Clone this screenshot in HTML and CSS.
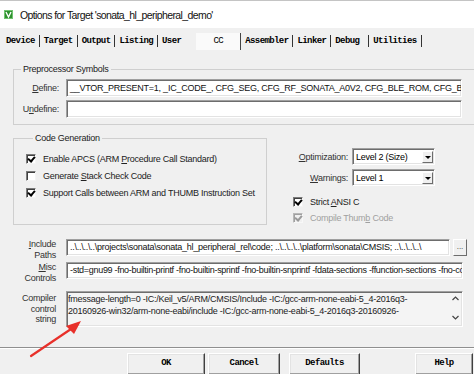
FILE: index.html
```html
<!DOCTYPE html>
<html>
<head>
<meta charset="utf-8">
<title>Options for Target</title>
<link rel="stylesheet" href="styles.css">
</head>
<body>
<div class="window">
  <div class="titlebar">
    <svg class="app-icon" viewBox="0 0 9 9" width="9" height="9">
      <rect x="0" y="0" width="9" height="9" fill="#2f8f2f"/>
      <rect x="0.5" y="0.5" width="8" height="8" fill="none" stroke="#6fc46f" stroke-width="1"/>
      <path d="M2 2 L4.5 7 L7 2" fill="none" stroke="#fff" stroke-width="1.4"/>
    </svg>
    <span class="title">Options for Target 'sonata_hl_peripheral_demo'</span>
  </div>

  <div class="tabs">
    <span class="tab">Device</span><span class="sep"></span>
    <span class="tab">Target</span><span class="sep"></span>
    <span class="tab">Output</span><span class="sep"></span>
    <span class="tab">Listing</span><span class="sep"></span>
    <span class="tab">User</span>
    <span class="tab tab-active">CC</span>
    <span class="tab">Assembler</span><span class="sep"></span>
    <span class="tab">Linker</span><span class="sep"></span>
    <span class="tab tab-wide">Debug</span><span class="sep"></span>
    <span class="tab">Utilities</span><span class="sep"></span>
  </div>

  <div class="panel">
    <fieldset class="group group-pre">
      <legend>Preprocessor Symbols</legend>
      <div class="field-row">
        <span class="field-label"><u>D</u>efine:</span>
        <div class="input input-define">__VTOR_PRESENT=1, _IC_CODE_, CFG_SEG, CFG_RF_SONATA_A0V2, CFG_BLE_ROM, CFG_B</div>
      </div>
      <div class="field-row">
        <span class="field-label">U<u>n</u>define:</span>
        <div class="input input-define"></div>
      </div>
    </fieldset>

    <div class="mid">
      <fieldset class="group group-code">
        <legend>Code Generation</legend>
        <div class="check-row"><span class="cb cb-on"></span><span>Enable APCS (ARM <u>P</u>rocedure Call Standard)</span></div>
        <div class="check-row"><span class="cb"></span><span>Generate <u>S</u>tack Check Code</span></div>
        <div class="check-row"><span class="cb cb-on"></span><span>Support Calls between ARM and THUMB Instruction Set</span></div>
      </fieldset>

      <div class="opts">
        <div class="opt-row">
          <span class="opt-label"><u>O</u>ptimization:</span>
          <div class="select"><span class="select-text">Level 2 (Size)</span><span class="select-btn"></span></div>
        </div>
        <div class="opt-row">
          <span class="opt-label"><u>W</u>arnings:</span>
          <div class="select"><span class="select-text">Level 1</span><span class="select-btn"></span></div>
        </div>
        <div class="check-row opt-check"><span class="cb cb-on"></span><span>Strict <u>A</u>NSI C</span></div>
        <div class="check-row opt-check disabled"><span class="cb cb-on"></span><span>Compile Thum<u>b</u> Code</span></div>
      </div>
    </div>

    <div class="paths">
      <div class="prow">
        <span class="plabel"><u>I</u>nclude<br>Paths</span>
        <div class="input input-include">..\..\..\..\projects\sonata\sonata_hl_peripheral_rel\code; ..\..\..\..\platform\sonata\CMSIS; ..\..\..\..\</div>
        <span class="btn-ellipsis">...</span>
      </div>
      <div class="prow">
        <span class="plabel"><u>M</u>isc<br>Controls</span>
        <div class="input input-wide">-std=gnu99 -fno-builtin-printf -fno-builtin-sprintf -fno-builtin-snprintf -fdata-sections -ffunction-sections -fno-co</div>
      </div>
      <div class="prow prow-compiler">
        <span class="plabel">Compiler<br>control<br>string</span>
        <div class="input input-area">
          <div class="area-text">fmessage-length=0 -IC:/Keil_v5/ARM/CMSIS/Include -IC:/gcc-arm-none-eabi-5_4-2016q3-<br>20160926-win32/arm-none-eabi/include -IC:/gcc-arm-none-eabi-5_4-2016q3-20160926-</div>
          <div class="area-scroll">
            <svg width="7" height="5" viewBox="0 0 7 5"><path d="M0.5 4 L3.5 1 L6.5 4" fill="none" stroke="#444" stroke-width="1.2"/></svg>
            <svg width="7" height="5" viewBox="0 0 7 5"><path d="M0.5 1 L3.5 4 L6.5 1" fill="none" stroke="#444" stroke-width="1.2"/></svg>
          </div>
        </div>
      </div>
    </div>
  </div>

  <div class="footer">
    <span class="btn btn-ok">OK</span>
    <span class="btn btn-cancel">Cancel</span>
    <span class="btn btn-defaults">Defaults</span>
    <span class="btn btn-help">Help</span>
  </div>

  <svg class="arrow" width="474" height="374" viewBox="0 0 474 374">
    <line x1="31" y1="356" x2="71" y2="329" stroke="#e8302a" stroke-width="2.2" stroke-linecap="round"/>
    <polygon points="81,321 66,326 74,334" fill="#e8302a"/>
  </svg>
</div>
</body>
</html>
```

FILE: styles.css
```css
* { box-sizing: border-box; }

html, body {
  margin: 0;
  padding: 0;
}

body {
  width: 474px;
  height: 374px;
  overflow: hidden;
  background: #f0f0f0;
  font-family: "Liberation Sans", Arial, sans-serif;
  font-size: 9px;
  letter-spacing: -0.25px;
  color: #000;
}

.window {
  position: relative;
  width: 474px;
  height: 374px;
}

/* title bar */
.titlebar {
  height: 28px;
  background: #fff;
  border-top: 1px solid #c4c4c4;
  display: flex;
  align-items: center;
  padding-left: 4px;
}

.app-icon { margin-right: 7px; flex: none; }

.title {
  font-family: "Liberation Sans", Arial, sans-serif;
  font-size: 10.5px;
  letter-spacing: -0.6px;
  color: #111;
}

/* tabs */
.tabs {
  height: 21px;
  display: flex;
  align-items: center;
  padding-top: 5px;
  padding-left: 2px;
  font-family: "Liberation Mono", monospace;
  font-weight: bold;
  font-size: 9px;
  letter-spacing: -0.6px;
  white-space: nowrap;
}

.tab {
  padding: 0 4px;
  line-height: 12px;
}

.tab-wide { padding-right: 9px; }

.tab-active {
  margin-left: 11px;
  width: 45px;
  height: 17px;
  line-height: 17px;
  text-align: center;
  background: #fafafa;
  border-right: 1px solid #444;
  font-weight: normal;
}

.sep {
  width: 1px;
  height: 12px;
  background: #333;
  flex: none;
}

/* panel */
.panel {
  height: 298px;
  padding: 14px 0 0 13px;
}

.group {
  border: 1px solid #cfcfcf;
  margin: 0;
  padding: 0;
  min-width: 0;
}

.group legend {
  margin-left: 7px;
  padding: 0 2px;
  line-height: 12px;
  color: #222;
}

.group-pre {
  width: 480px;
  padding: 4px 0 6px 0;
}

.field-row {
  display: flex;
  align-items: center;
  margin-bottom: 3px;
}

.field-row:last-child { margin-bottom: 0; }

.field-label {
  width: 45px;
  text-align: right;
  margin-right: 7px;
  color: #333;
}

.input {
  height: 18px;
  background: #fff;
  border: 1px solid;
  border-color: #a0a0a0 #fff #fff #a0a0a0;
  box-shadow: inset 1px 1px 0 #6d6d6d, inset -1px -1px 0 #e3e3e3;
  padding: 0 3px;
  line-height: 16px;
  white-space: nowrap;
  overflow: hidden;
  color: #111;
}

.input-define {
  width: 396px;
  font-size: 9px;
  letter-spacing: -0.25px;
}

/* middle */
.mid {
  display: flex;
  align-items: flex-start;
}

.group-code {
  margin-top: 7px;
  width: 254px;
  height: 93px;
  padding: 6px 0 0 12px;
}

.check-row {
  display: flex;
  align-items: center;
  height: 17px;
  white-space: nowrap;
  color: #222;
}

.cb {
  width: 10px;
  height: 10px;
  margin-right: 7px;
  background: #fff;
  border: 1px solid;
  border-color: #7a7a7a #f4f4f4 #f4f4f4 #7a7a7a;
  box-shadow: inset 1px 1px 0 #404040;
  flex: none;
  position: relative;
}

.cb-on::after {
  content: "";
  position: absolute;
  left: 2px;
  top: 0px;
  width: 3px;
  height: 5px;
  border: solid #000;
  border-width: 0 2px 2px 0;
  transform: rotate(40deg);
}

.opts {
  margin-left: 23px;
  margin-top: 23px;
}

.opt-row {
  display: flex;
  align-items: center;
  margin-bottom: 4px;
}

.opt-label {
  width: 58px;
  text-align: right;
  margin-right: 4px;
  color: #333;
}

.select {
  width: 83px;
  height: 17px;
  display: flex;
  align-items: center;
  background: #fff;
  border: 1px solid;
  border-color: #a0a0a0 #fff #fff #a0a0a0;
  box-shadow: inset 1px 1px 0 #6d6d6d, inset -1px -1px 0 #e3e3e3;
  padding: 0 1px 0 3px;
}

.select-text { flex: 1; }

.select-btn {
  width: 11px;
  height: 12px;
  background: #f0f0f0;
  border: 1px solid;
  border-color: #fff #6d6d6d #6d6d6d #fff;
  position: relative;
}

.select-btn::after {
  content: "";
  position: absolute;
  left: 2px;
  top: 4px;
  border-left: 3px solid transparent;
  border-right: 3px solid transparent;
  border-top: 3px solid #000;
}

.opt-check { padding-left: 3px; height: 16px; }
.opt-row + .opt-row { margin-bottom: 8px; }

.disabled { color: #a0a0a0; }
.disabled .cb {
  background: #f0f0f0;
  border-color: #b8b8b8 #f8f8f8 #f8f8f8 #b8b8b8;
  box-shadow: inset 1px 1px 0 #a0a0a0;
}
.disabled .cb-on::after { border-color: #9a9a9a; }

/* paths */
.paths { margin-top: 13px; }

.prow {
  display: flex;
  align-items: flex-start;
  margin-bottom: 2px;
}

.prow-compiler { margin-top: 8px; }

.plabel {
  width: 43px;
  margin-right: 10px;
  text-align: right;
  line-height: 10.5px;
  color: #333;
  flex: none;
}

.prow-compiler .plabel { padding-top: 2px; }

.input-include { width: 384px; height: 17px; line-height: 15px; }
.input-wide { width: 397px; height: 17px; line-height: 15px; letter-spacing: -0.3px; }

.btn-ellipsis {
  margin-left: 3px;
  width: 14px;
  height: 17px;
  background: #f0f0f0;
  border: 1px solid;
  border-color: #fff #6d6d6d #6d6d6d #fff;
  font-size: 8px;
  letter-spacing: 0;
  line-height: 13px;
  text-align: center;
  color: #333;
}

.input-area {
  width: 397px;
  height: 36px;
  background: #f4f4f4;
  display: flex;
  padding: 1px 2px 1px 1px;
  white-space: nowrap;
  color: #222;
}

.area-text {
  flex: 1;
  overflow: hidden;
  line-height: 12px;
}

.area-scroll {
  width: 10px;
  display: flex;
  flex-direction: column;
  justify-content: space-between;
  align-items: center;
  padding: 3px 0 5px;
}

/* footer */
.footer {
  height: 27px;
  border-top: 1px solid #8f8f8f;
  box-shadow: inset 0 1px 0 #fff;
  padding-top: 5px;
  display: flex;
  font-family: "Liberation Mono", monospace;
  font-weight: bold;
  font-size: 9px;
  letter-spacing: -0.6px;
}

.btn {
  height: 22px;
  background: #f0f0f0;
  border: 1px solid;
  border-color: #fff #404040 #404040 #fff;
  box-shadow: inset -1px -1px 0 #a0a0a0, inset 1px 1px 0 #e3e3e3;
  text-align: center;
  line-height: 18px;
}

.btn-ok { margin-left: 127px; width: 78px; }
.btn-cancel { margin-left: 3px; width: 72px; }
.btn-defaults { margin-left: 9px; width: 71px; }
.btn-help { margin-left: 55px; width: 58px; }

.arrow {
  position: absolute;
  left: 0;
  top: 0;
  pointer-events: none;
}
```
